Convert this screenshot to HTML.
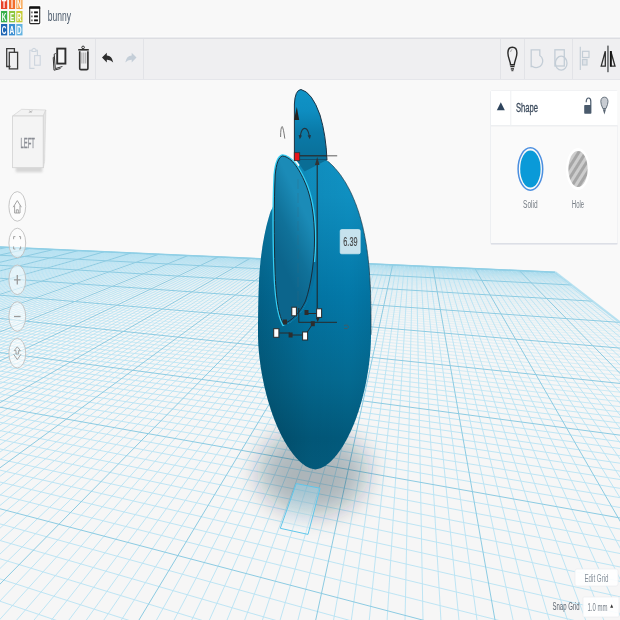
<!DOCTYPE html>
<html><head><meta charset="utf-8">
<style>
html,body{margin:0;padding:0;width:620px;height:620px;overflow:hidden;background:#f9f9f9;font-family:"Liberation Sans",sans-serif;}
svg{position:absolute;left:0;top:0;}
</style></head><body>
<svg class="grid" width="620" height="620" viewBox="0 0 620 620">
<polygon points="555.1,272.2 -61.7,244.2 -821.2,373.0 3083.9,2229.5" fill="#f6f6f6"/>
<g shape-rendering="crispEdges"><polygon points="555.1,272.2 -61.7,244.2 -65.0,244.8 556.6,273.4" fill="#8ccfe6" fill-opacity="0.750"/><polygon points="556.6,273.4 -65.0,244.8 -68.3,245.4 558.1,274.6" fill="#8ccfe6" fill-opacity="0.679"/><polygon points="558.1,274.6 -68.3,245.4 -71.7,245.9 559.7,275.8" fill="#8ccfe6" fill-opacity="0.614"/><polygon points="559.7,275.8 -71.7,245.9 -75.1,246.5 561.3,277.0" fill="#8ccfe6" fill-opacity="0.556"/><polygon points="561.3,277.0 -75.1,246.5 -78.6,247.1 562.9,278.3" fill="#8ccfe6" fill-opacity="0.503"/><polygon points="562.9,278.3 -78.6,247.1 -82.1,247.7 564.6,279.5" fill="#8ccfe6" fill-opacity="0.455"/><polygon points="564.6,279.5 -82.1,247.7 -85.6,248.3 566.3,280.9" fill="#8ccfe6" fill-opacity="0.412"/><polygon points="566.3,280.9 -85.6,248.3 -89.2,248.9 568.0,282.2" fill="#8ccfe6" fill-opacity="0.372"/><polygon points="568.0,282.2 -89.2,248.9 -92.9,249.5 569.8,283.6" fill="#8ccfe6" fill-opacity="0.337"/><polygon points="569.8,283.6 -92.9,249.5 -96.6,250.2 571.6,285.0" fill="#8ccfe6" fill-opacity="0.305"/><polygon points="571.6,285.0 -96.6,250.2 -100.4,250.8 573.5,286.5" fill="#8ccfe6" fill-opacity="0.276"/><polygon points="573.5,286.5 -100.4,250.8 -104.2,251.5 575.4,287.9" fill="#8ccfe6" fill-opacity="0.250"/><polygon points="575.4,287.9 -104.2,251.5 -108.1,252.1 577.4,289.5" fill="#8ccfe6" fill-opacity="0.226"/><polygon points="577.4,289.5 -108.1,252.1 -112.1,252.8 579.4,291.0" fill="#8ccfe6" fill-opacity="0.204"/><polygon points="579.4,291.0 -112.1,252.8 -116.1,253.5 581.4,292.6" fill="#8ccfe6" fill-opacity="0.185"/><polygon points="581.4,292.6 -116.1,253.5 -120.1,254.2 583.5,294.2" fill="#8ccfe6" fill-opacity="0.167"/><polygon points="583.5,294.2 -120.1,254.2 -124.3,254.9 585.7,295.9" fill="#8ccfe6" fill-opacity="0.151"/><polygon points="585.7,295.9 -124.3,254.9 -128.5,255.6 587.9,297.6" fill="#8ccfe6" fill-opacity="0.137"/><polygon points="587.9,297.6 -128.5,255.6 -132.7,256.3 590.2,299.4" fill="#8ccfe6" fill-opacity="0.124"/><polygon points="590.2,299.4 -132.7,256.3 -137.1,257.0 592.6,301.2" fill="#8ccfe6" fill-opacity="0.112"/><polygon points="592.6,301.2 -137.1,257.0 -141.5,257.8 595.0,303.1" fill="#8ccfe6" fill-opacity="0.102"/><polygon points="595.0,303.1 -141.5,257.8 -145.9,258.5 597.4,305.0" fill="#8ccfe6" fill-opacity="0.092"/><polygon points="597.4,305.0 -145.9,258.5 -150.5,259.3 600.0,307.0" fill="#8ccfe6" fill-opacity="0.083"/><polygon points="600.0,307.0 -150.5,259.3 -155.1,260.1 602.6,309.0" fill="#8ccfe6" fill-opacity="0.075"/><polygon points="602.6,309.0 -155.1,260.1 -159.8,260.9 605.3,311.1" fill="#8ccfe6" fill-opacity="0.068"/><polygon points="605.3,311.1 -159.8,260.9 -164.5,261.7 608.0,313.2" fill="#8ccfe6" fill-opacity="0.062"/><polygon points="608.0,313.2 -164.5,261.7 -169.4,262.5 610.9,315.4" fill="#8ccfe6" fill-opacity="0.056"/><polygon points="610.9,315.4 -169.4,262.5 -174.3,263.3 613.8,317.7" fill="#8ccfe6" fill-opacity="0.050"/><polygon points="613.8,317.7 -174.3,263.3 -179.3,264.2 616.8,320.0" fill="#8ccfe6" fill-opacity="0.046"/><polygon points="616.8,320.0 -179.3,264.2 -184.4,265.1 619.9,322.4" fill="#8ccfe6" fill-opacity="0.041"/><polygon points="619.9,322.4 -184.4,265.1 -189.6,265.9 623.1,324.9" fill="#8ccfe6" fill-opacity="0.037"/><polygon points="623.1,324.9 -189.6,265.9 -194.9,266.8 626.5,327.5" fill="#8ccfe6" fill-opacity="0.034"/><polygon points="626.5,327.5 -194.9,266.8 -200.3,267.7 629.9,330.1" fill="#8ccfe6" fill-opacity="0.031"/><polygon points="629.9,330.1 -200.3,267.7 -205.7,268.7 633.4,332.8" fill="#8ccfe6" fill-opacity="0.028"/><polygon points="633.4,332.8 -205.7,268.7 -211.3,269.6 637.1,335.7" fill="#8ccfe6" fill-opacity="0.025"/><polygon points="637.1,335.7 -211.3,269.6 -217.0,270.6 640.8,338.6" fill="#8ccfe6" fill-opacity="0.023"/><polygon points="640.8,338.6 -217.0,270.6 -222.7,271.6 644.7,341.6" fill="#8ccfe6" fill-opacity="0.020"/><polygon points="644.7,341.6 -222.7,271.6 -228.6,272.6 648.8,344.7" fill="#8ccfe6" fill-opacity="0.019"/><polygon points="648.8,344.7 -228.6,272.6 -234.6,273.6 652.9,348.0" fill="#8ccfe6" fill-opacity="0.017"/><polygon points="652.9,348.0 -234.6,273.6 -240.7,274.6 657.3,351.3" fill="#8ccfe6" fill-opacity="0.015"/></g>
<path d="M552.0 272.1L2943.7 2162.8M547.2 271.9L2747.3 2069.4M542.5 271.6L2568.6 1984.5M537.9 271.4L2405.4 1906.9M533.2 271.2L2255.8 1835.8M528.6 271.0L2118.1 1770.3M524.0 270.8L1990.9 1709.9M514.9 270.4L1763.7 1601.9M510.3 270.2L1661.9 1553.4M505.8 270.0L1566.8 1508.2M501.4 269.8L1477.8 1465.9M496.9 269.6L1394.3 1426.3M492.5 269.4L1315.9 1389.0M488.1 269.2L1242.1 1353.9M483.7 269.0L1172.5 1320.8M479.3 268.8L1106.8 1289.6M470.7 268.4L985.6 1232.0M466.4 268.2L929.7 1205.4M462.1 268.0L876.6 1180.1M457.8 267.8L826.0 1156.1M453.6 267.6L777.9 1133.2M449.4 267.4L732.0 1111.4M445.2 267.2L688.2 1090.6M441.0 267.0L646.3 1070.6M436.9 266.9L606.2 1051.6M428.7 266.5L531.1 1015.9M424.6 266.3L495.8 999.1M420.5 266.1L461.9 983.0M416.5 265.9L429.4 967.5M412.4 265.7L398.1 952.7M408.4 265.6L368.0 938.4M404.5 265.4L339.0 924.6M400.5 265.2L311.0 911.3M396.6 265.0L284.1 898.5M388.7 264.7L233.0 874.2M384.8 264.5L208.7 862.6M381.0 264.3L185.3 851.5M377.1 264.1L162.6 840.7M373.3 264.0L140.6 830.3M369.5 263.8L119.4 820.2M365.7 263.6L98.8 810.4M361.9 263.5L78.8 800.9M358.2 263.3L59.4 791.7M350.7 262.9L22.4 774.1M347.0 262.8L4.7 765.7M343.3 262.6L-12.5 757.5M339.6 262.4L-29.2 749.6M336.0 262.3L-45.4 741.8M332.4 262.1L-61.2 734.3M328.7 262.0L-76.6 727.0M325.1 261.8L-91.6 719.9M321.6 261.6L-106.2 713.0M314.4 261.3L-134.2 699.6M310.9 261.1L-147.7 693.2M307.4 261.0L-160.8 687.0M303.9 260.8L-173.6 680.9M300.4 260.7L-186.2 674.9M297.0 260.5L-198.4 669.1M293.5 260.4L-210.3 663.5M290.1 260.2L-221.9 657.9M286.6 260.0L-233.3 652.5M279.9 259.7L-255.3 642.1M276.5 259.6L-265.9 637.0M273.1 259.4L-276.2 632.1M269.8 259.3L-286.4 627.3M266.5 259.1L-296.3 622.6M263.1 259.0L-306.0 617.9M259.8 258.8L-315.5 613.4M256.6 258.7L-324.9 609.0M253.3 258.5L-334.0 604.7M246.8 258.2L-351.6 596.3M243.6 258.1L-360.2 592.2M240.4 257.9L-368.6 588.2M237.2 257.8L-376.8 584.3M234.0 257.7L-384.9 580.4M230.8 257.5L-392.8 576.7M227.7 257.4L-400.6 573.0M224.5 257.2L-408.2 569.4M221.4 257.1L-415.7 565.8M215.2 256.8L-430.2 558.9M212.1 256.7L-437.3 555.6M209.0 256.5L-444.2 552.3M206.0 256.4L-451.0 549.0M202.9 256.2L-457.7 545.8M199.9 256.1L-464.3 542.7M196.9 256.0L-470.7 539.7M193.9 255.8L-477.1 536.6M190.9 255.7L-483.3 533.7M184.9 255.4L-495.4 527.9M182.0 255.3L-501.4 525.1M179.0 255.2L-507.2 522.3M176.1 255.0L-512.9 519.6M173.2 254.9L-518.6 516.9M170.3 254.8L-524.1 514.3M167.4 254.6L-529.6 511.7M164.5 254.5L-534.9 509.1M161.7 254.4L-540.2 506.6M156.0 254.1L-550.5 501.7M153.1 254.0L-555.5 499.3M150.3 253.9L-560.5 497.0M147.5 253.7L-565.4 494.6M144.7 253.6L-570.2 492.4M141.9 253.5L-574.9 490.1M139.1 253.4L-579.6 487.9M136.4 253.2L-584.2 485.7M133.6 253.1L-588.7 483.5M128.1 252.9L-597.6 479.3M125.4 252.7L-601.9 477.3M122.7 252.6L-606.2 475.2M120.0 252.5L-610.4 473.2M117.3 252.4L-614.6 471.3M114.7 252.2L-618.7 469.3M112.0 252.1L-622.7 467.4M109.4 252.0L-626.7 465.5M106.7 251.9L-630.6 463.6M101.5 251.6L-638.3 460.0M98.9 251.5L-642.1 458.2M96.3 251.4L-645.8 456.4M93.7 251.3L-649.5 454.7M91.1 251.2L-653.1 452.9M88.5 251.1L-656.7 451.2M86.0 250.9L-660.2 449.6M83.4 250.8L-663.7 447.9M80.9 250.7L-667.2 446.3M75.8 250.5L-673.9 443.1M73.3 250.4L-677.2 441.5M70.8 250.3L-680.5 439.9M68.3 250.1L-683.7 438.4M65.9 250.0L-686.9 436.9M63.4 249.9L-690.1 435.4M60.9 249.8L-693.2 433.9M58.5 249.7L-696.2 432.4M56.0 249.6L-699.3 431.0M51.2 249.4L-705.2 428.2M48.8 249.3L-708.2 426.8M46.4 249.1L-711.1 425.4M44.0 249.0L-713.9 424.0M41.6 248.9L-716.8 422.7M39.2 248.8L-719.6 421.4M36.8 248.7L-722.3 420.0M34.5 248.6L-725.1 418.7M32.1 248.5L-727.8 417.5M27.5 248.3L-733.1 414.9M25.2 248.2L-735.7 413.7M22.8 248.1L-738.3 412.5M20.5 248.0L-740.8 411.3M18.2 247.9L-743.3 410.1M16.0 247.8L-745.8 408.9M13.7 247.7L-748.3 407.7M11.4 247.6L-750.8 406.5M9.1 247.5L-753.2 405.4" stroke="#bae4f3" stroke-width="0.95" fill="none"/>
<g stroke="#bae4f3" stroke-width="0.95" fill="none"><path d="M556.6 273.4L-65.0 244.8" stroke-opacity="0.20"/><path d="M558.1 274.6L-68.3 245.4" stroke-opacity="0.20"/><path d="M559.7 275.8L-71.7 245.9" stroke-opacity="0.20"/><path d="M561.3 277.0L-75.1 246.5" stroke-opacity="0.20"/><path d="M562.9 278.3L-78.6 247.1" stroke-opacity="0.20"/><path d="M564.6 279.5L-82.1 247.7" stroke-opacity="0.20"/><path d="M566.3 280.9L-85.6 248.3" stroke-opacity="0.20"/><path d="M568.0 282.2L-89.2 248.9" stroke-opacity="0.20"/><path d="M569.8 283.6L-92.9 249.5" stroke-opacity="0.20"/><path d="M573.5 286.5L-100.4 250.8" stroke-opacity="0.20"/><path d="M575.4 287.9L-104.2 251.5" stroke-opacity="0.20"/><path d="M577.4 289.5L-108.1 252.1" stroke-opacity="0.20"/><path d="M579.4 291.0L-112.1 252.8" stroke-opacity="0.20"/><path d="M581.4 292.6L-116.1 253.5" stroke-opacity="0.20"/><path d="M583.5 294.2L-120.1 254.2" stroke-opacity="0.20"/><path d="M585.7 295.9L-124.3 254.9" stroke-opacity="0.20"/><path d="M587.9 297.6L-128.5 255.6" stroke-opacity="0.20"/><path d="M590.2 299.4L-132.7 256.3" stroke-opacity="0.20"/><path d="M595.0 303.1L-141.5 257.8" stroke-opacity="0.20"/><path d="M597.4 305.0L-145.9 258.5" stroke-opacity="0.20"/><path d="M600.0 307.0L-150.5 259.3" stroke-opacity="0.20"/><path d="M602.6 309.0L-155.1 260.1" stroke-opacity="0.20"/><path d="M605.3 311.1L-159.8 260.9" stroke-opacity="0.21"/><path d="M608.0 313.2L-164.5 261.7" stroke-opacity="0.22"/><path d="M610.9 315.4L-169.4 262.5" stroke-opacity="0.23"/><path d="M613.8 317.7L-174.3 263.3" stroke-opacity="0.24"/><path d="M616.8 320.0L-179.3 264.2" stroke-opacity="0.25"/><path d="M623.1 324.9L-189.6 265.9" stroke-opacity="0.28"/><path d="M626.5 327.5L-194.9 266.8" stroke-opacity="0.29"/><path d="M629.9 330.1L-200.3 267.7" stroke-opacity="0.31"/><path d="M633.4 332.8L-205.7 268.7" stroke-opacity="0.32"/><path d="M637.1 335.7L-211.3 269.6" stroke-opacity="0.34"/><path d="M640.8 338.6L-217.0 270.6" stroke-opacity="0.35"/><path d="M644.7 341.6L-222.7 271.6" stroke-opacity="0.37"/><path d="M648.8 344.7L-228.6 272.6" stroke-opacity="0.39"/><path d="M652.9 348.0L-234.6 273.6" stroke-opacity="0.40"/><path d="M661.8 354.8L-246.9 275.7" stroke-opacity="0.44"/><path d="M666.4 358.4L-253.3 276.7" stroke-opacity="0.46"/><path d="M671.3 362.1L-259.7 277.8" stroke-opacity="0.48"/><path d="M676.3 366.0L-266.3 278.9" stroke-opacity="0.51"/><path d="M681.5 370.1L-273.0 280.1" stroke-opacity="0.53"/><path d="M687.0 374.3L-279.8 281.2" stroke-opacity="0.55"/><path d="M692.7 378.7L-286.8 282.4" stroke-opacity="0.58"/><path d="M698.6 383.3L-294.0 283.6" stroke-opacity="0.60"/><path d="M704.8 388.1L-301.2 284.9" stroke-opacity="0.63"/><path d="M717.9 398.3L-316.2 287.4" stroke-opacity="0.69"/><path d="M725.0 403.7L-324.0 288.7" stroke-opacity="0.72"/><path d="M732.4 409.4L-331.9 290.1" stroke-opacity="0.76"/><path d="M740.1 415.4L-339.9 291.4" stroke-opacity="0.79"/><path d="M748.3 421.7L-348.2 292.8" stroke-opacity="0.83"/><path d="M756.8 428.4L-356.6 294.3" stroke-opacity="0.87"/><path d="M765.8 435.3L-365.3 295.7" stroke-opacity="0.91"/><path d="M775.3 442.7L-374.1 297.2" stroke-opacity="0.95"/><path d="M785.4 450.4L-383.1 298.7" stroke-opacity="1.00"/><path d="M807.2 467.3L-401.8 301.9" stroke-opacity="1.00"/><path d="M819.1 476.5L-411.4 303.6" stroke-opacity="1.00"/><path d="M831.7 486.3L-421.3 305.2" stroke-opacity="1.00"/><path d="M845.2 496.7L-431.5 307.0" stroke-opacity="1.00"/><path d="M859.5 507.8L-441.9 308.7" stroke-opacity="1.00"/><path d="M874.9 519.7L-452.5 310.5" stroke-opacity="1.00"/><path d="M891.3 532.4L-463.4 312.4" stroke-opacity="1.00"/><path d="M909.0 546.1L-474.6 314.3" stroke-opacity="1.00"/><path d="M928.0 560.8L-486.1 316.2" stroke-opacity="1.00"/><path d="M970.7 593.9L-510.0 320.3" stroke-opacity="1.00"/><path d="M994.9 612.6L-522.4 322.4" stroke-opacity="1.00"/><path d="M1021.3 633.1L-535.1 324.5" stroke-opacity="1.00"/><path d="M1050.2 655.4L-548.3 326.8" stroke-opacity="1.00"/><path d="M1082.0 680.0L-561.7 329.0" stroke-opacity="1.00"/><path d="M1117.1 707.2L-575.6 331.4" stroke-opacity="1.00"/><path d="M1156.1 737.4L-589.8 333.8" stroke-opacity="1.00"/><path d="M1199.7 771.2L-604.5 336.3" stroke-opacity="1.00"/><path d="M1248.8 809.1L-619.6 338.9" stroke-opacity="1.00"/><path d="M1368.0 901.4L-651.2 344.2" stroke-opacity="1.00"/><path d="M1441.3 958.1L-667.8 347.0" stroke-opacity="1.00"/><path d="M1526.9 1024.4L-684.8 349.9" stroke-opacity="1.00"/><path d="M1628.0 1102.6L-702.4 352.9" stroke-opacity="1.00"/><path d="M1749.3 1196.5L-720.6 356.0" stroke-opacity="1.00"/><path d="M1897.6 1311.3L-739.4 359.2" stroke-opacity="1.00"/><path d="M2083.0 1454.8L-758.8 362.5" stroke-opacity="1.00"/><path d="M2321.3 1639.2L-778.9 365.9" stroke-opacity="1.00"/><path d="M2639.1 1885.2L-799.7 369.4" stroke-opacity="1.00"/></g>
<path d="M519.4 270.6L1873.1 1653.9M475.0 268.6L1044.6 1260.0M432.8 266.7L567.8 1033.4M392.6 264.9L258.1 886.1M354.4 263.1L40.7 782.8M318.0 261.5L-120.4 706.2M283.2 259.9L-244.4 647.2M250.0 258.4L-342.9 600.4M218.3 256.9L-423.0 562.3M187.9 255.6L-489.4 530.8M158.8 254.2L-545.4 504.2M130.9 253.0L-593.2 481.4M104.1 251.8L-634.5 461.8M78.3 250.6L-670.6 444.7M53.6 249.5L-702.3 429.6M29.8 248.4L-730.4 416.2M6.9 247.4L-755.6 404.2M555.1 272.2L-61.7 244.2M571.6 285.0L-96.6 250.2M592.6 301.2L-137.1 257.0M619.9 322.4L-184.4 265.1M657.3 351.3L-240.7 274.6M711.2 393.0L-308.6 286.1M796.0 458.6L-392.3 300.3M948.5 576.7L-497.9 318.2M1304.4 852.2L-635.2 341.5M3083.9 2229.5L-821.2 373.0" stroke="#8ccbe2" stroke-width="1.0" fill="none"/>
<path d="M555.1 272.2L-61.7 244.2" stroke="#8fcfe6" stroke-width="1.5" fill="none"/>
<path d="M555.1 272.2L3083.9 2229.5" stroke="#a8dbee" stroke-width="2.2" fill="none" opacity="0.8"/>
</svg>
<svg width="620" height="620" viewBox="0 0 620 620" style="font-family:'Liberation Sans',sans-serif;will-change:transform">
<defs>
  <filter id="blur2" x="-50%" y="-50%" width="200%" height="200%"><feGaussianBlur stdDeviation="1.2"/></filter>
  <filter id="blur1" x="-50%" y="-50%" width="200%" height="200%"><feGaussianBlur stdDeviation="11"/></filter>
  <linearGradient id="bodyg" gradientUnits="userSpaceOnUse" x1="0" y1="159" x2="0" y2="469">
    <stop offset="0" stop-color="#1092c4"/>
    <stop offset="0.12" stop-color="#0f8fc0"/>
    <stop offset="0.44" stop-color="#0378a8"/>
    <stop offset="0.71" stop-color="#046a91"/>
    <stop offset="0.9" stop-color="#02597b"/>
    <stop offset="1" stop-color="#035c7e"/>
  </linearGradient>
  <linearGradient id="bodyh" gradientUnits="userSpaceOnUse" x1="258" y1="0" x2="371" y2="0">
    <stop offset="0" stop-color="#000" stop-opacity="0.2"/>
    <stop offset="0.45" stop-color="#000" stop-opacity="0.04"/>
    <stop offset="0.8" stop-color="#000" stop-opacity="0"/>
    <stop offset="1" stop-color="#000" stop-opacity="0.05"/>
  </linearGradient>
  <linearGradient id="earg" gradientUnits="userSpaceOnUse" x1="0" y1="90" x2="0" y2="160">
    <stop offset="0" stop-color="#1093c6"/>
    <stop offset="0.3" stop-color="#0e8dc0"/>
    <stop offset="0.6" stop-color="#0a7aa8"/>
    <stop offset="1" stop-color="#0a6f98"/>
  </linearGradient>
  <linearGradient id="inng" gradientUnits="userSpaceOnUse" x1="276" y1="250" x2="314" y2="232">
    <stop offset="0" stop-color="#0c658c"/>
    <stop offset="0.45" stop-color="#107199"/>
    <stop offset="1" stop-color="#1b8bb7"/>
  </linearGradient>
  <radialGradient id="shad" cx="0.5" cy="0.5" r="0.5">
    <stop offset="0" stop-color="#000" stop-opacity="0.28"/>
    <stop offset="0.6" stop-color="#000" stop-opacity="0.12"/>
    <stop offset="1" stop-color="#000" stop-opacity="0"/>
  </radialGradient>
  <pattern id="holep" width="6" height="6" patternUnits="userSpaceOnUse" patternTransform="rotate(32)">
    <rect width="6" height="6" fill="#cdcdcd"/><rect width="3" height="6" fill="#a6a6a6"/>
  </pattern>
</defs>

<!-- top bar -->
<rect x="0" y="0" width="620" height="37" fill="#f8f8f8"/>
<rect x="0" y="36.3" width="620" height="1.2" fill="#fbfbfc"/>
<rect x="0" y="37.5" width="620" height="1.7" fill="#dcdde2"/>
<rect x="0" y="39.2" width="620" height="39.8" fill="#efeff1"/>
<rect x="0" y="79" width="620" height="1" fill="#e5e6ea"/>

<!-- logo -->
<g>
<rect x="1" y="-2" width="6.2" height="11" fill="#e8412a"/>
<rect x="9" y="-2" width="6.1" height="11" fill="#f26c2b"/>
<rect x="16.3" y="-2" width="6.2" height="11" fill="#f89c3f"/>
<rect x="1" y="11" width="6.2" height="11.3" fill="#36b04b"/>
<rect x="9" y="11" width="6.1" height="11.3" fill="#8cc63f"/>
<rect x="16.3" y="11" width="6.2" height="11.3" fill="#c6cc37"/>
<rect x="1" y="24" width="6.2" height="11.4" fill="#1d65b4"/>
<rect x="9" y="24" width="6.1" height="11.4" fill="#3a8ed2"/>
<rect x="16.3" y="24" width="6.2" height="11.4" fill="#64b3e1"/>
<g fill="#fff" font-weight="bold" font-size="10.5" text-anchor="middle">
<text x="4.1" y="8" textLength="4.6" lengthAdjust="spacingAndGlyphs">T</text>
<text x="12" y="8" textLength="2" lengthAdjust="spacingAndGlyphs">I</text>
<text x="19.4" y="8" textLength="4.6" lengthAdjust="spacingAndGlyphs">N</text>
<text x="4.1" y="21" textLength="4.6" lengthAdjust="spacingAndGlyphs">K</text>
<text x="12" y="21" textLength="4.2" lengthAdjust="spacingAndGlyphs">E</text>
<text x="19.4" y="21" textLength="4.6" lengthAdjust="spacingAndGlyphs">R</text>
<text x="4.1" y="34" textLength="4.6" lengthAdjust="spacingAndGlyphs">C</text>
<text x="12" y="34" textLength="4.8" lengthAdjust="spacingAndGlyphs">A</text>
<text x="19.4" y="34" textLength="4.6" lengthAdjust="spacingAndGlyphs">D</text>
</g>
</g>
<!-- list icon -->
<rect x="28" y="5" width="13.5" height="20.5" fill="#fdfdfd"/>
<rect x="29.7" y="7" width="10" height="16.6" rx="0.8" fill="#fff" stroke="#2a2a2a" stroke-width="1.1"/>
<rect x="29.3" y="6.4" width="10.9" height="2.4" fill="#111"/>
<g fill="#777"><rect x="30.9" y="11.5" width="1.9" height="1.8"/><rect x="30.9" y="15.5" width="1.9" height="1.8"/><rect x="30.9" y="19.5" width="1.9" height="1.8"/></g>
<g fill="#111"><rect x="34.1" y="11.4" width="3.8" height="1.9"/><rect x="34.1" y="15.4" width="3.8" height="1.9"/><rect x="34.1" y="19.4" width="3.8" height="1.9"/></g>
<text x="47.8" y="20.8" font-size="15.3" fill="#4b5a6b" textLength="23.2" lengthAdjust="spacingAndGlyphs">bunny</text>

<!-- toolbar icons -->
<g fill="none" stroke="#3a3a3a" stroke-width="1.3">
 <!-- copy -->
 <path d="M10.5 66.5H6.7V48.6H14.4V52.3"/>
 <rect x="9.3" y="52.3" width="8.3" height="16.6"/>
</g>
<!-- duplicate -->
<g fill="none" stroke="#333" stroke-width="1">
 <path d="M55.8 53.5L54.2 54.2L55.3 68.6L62.4 66.5"/>
 <path d="M54.6 56.5L53.2 57.5L54 70.2L60.5 68.5"/>
</g>
<rect x="57.2" y="48.6" width="8.2" height="15" fill="#f7f7f8" stroke="#2e2e2e" stroke-width="1.9"/>
<!-- paste disabled -->
<g fill="none" stroke="#cdd5de" stroke-width="1.1">
 <path d="M32.3 50.3H29.8V68.4H34.5"/>
 <path d="M35.7 50.3H37.4V55.3"/>
 <path d="M32 51.5V49.8Q34 47 36 49.8V51.5Z"/>
 <rect x="34.6" y="55.6" width="5.6" height="9.6"/>
</g>
<!-- trash -->
<g fill="none" stroke="#2f2f2f" stroke-width="1.6">
 <path d="M78.2 49.8H88.8"/>
 <path d="M79.7 51.2V68.4Q79.7 69.6 81 69.6H86.6Q87.9 69.6 87.9 68.4V51.2"/>
</g>
<circle cx="83.1" cy="47.4" r="1.3" fill="none" stroke="#2f2f2f" stroke-width="1"/>
<g stroke="#7a7a7a" stroke-width="0.6"><path d="M81.9 52.5V63.5M83.8 52.5V63.5M85.7 52.5V63.5"/></g>
<!-- undo / redo -->
<path d="M102 57.6L106.8 52.8V55.6Q112 55.6 113.2 62.6Q110.8 59.5 106.8 59.7V62.6Z" fill="#2d2d2d"/>
<path d="M136.5 57.6L131.7 52.8V55.6Q126.5 55.6 125.3 62.6Q127.7 59.5 131.7 59.7V62.6Z" fill="#c4ced8"/>
<!-- separators -->
<g fill="#e2e3e7">
<rect x="95" y="39" width="1" height="40"/>
<rect x="143" y="39" width="1" height="40"/>
<rect x="500" y="39" width="1" height="40"/>
<rect x="524" y="39" width="1" height="40"/>
<rect x="572" y="39" width="1" height="40"/>
</g>
<!-- bulb -->
<g fill="none" stroke="#2b2b2b" stroke-width="1.4">
<path d="M510.5 64.8C510.5 61 507.9 58 507.9 53C507.9 49.3 509.8 47.3 512.4 47.3C515 47.3 516.9 49.3 516.9 53C516.9 58 514.3 61 514.3 64.8Z"/>
</g>
<g fill="#2b2b2b"><rect x="510.3" y="65.8" width="4.2" height="1.4"/><rect x="510.8" y="68.2" width="3.2" height="1.4"/><rect x="511.4" y="70.2" width="2" height="1"/></g>
<path d="M510.5 52Q511 49.6 512.4 49.2" stroke="#777" stroke-width="0.6" fill="none"/>
<!-- group shapes disabled -->
<g fill="none" stroke="#c3cdd6" stroke-width="1.3">
<path d="M531.2 66.5V49.8H539.8V55.5A6.2 6.2 0 1 1 532.6 66.5Z"/>
<rect x="554.9" y="49.8" width="9.4" height="16.2"/>
<ellipse cx="561.2" cy="63.2" rx="5.8" ry="7"/>
</g>
<!-- align -->
<g fill="none" stroke="#c3cdd6" stroke-width="1.2">
<path d="M580.3 46.8V70"/>
<rect x="582.5" y="51.3" width="6.5" height="6.2"/>
<rect x="582.5" y="59.5" width="4.5" height="5.5" fill="#dfe3e8"/>
</g>
<!-- mirror -->
<g>
<path d="M601.2 66.2L605.3 51.2V66.2Z" fill="none" stroke="#2e2e2e" stroke-width="1.3"/>
<path d="M610.8 51.2L615 66.2H610.8Z" fill="none" stroke="#2e2e2e" stroke-width="1.3"/>
<path d="M610.8 51V66.5" stroke="#111" stroke-width="1.8"/>
<rect x="607.1" y="45.6" width="1.7" height="26.6" fill="#6f7274"/>
</g>

<!-- view cube -->
<g>
<path d="M15.5 165H42.6L42.3 172.3H15.8Z" fill="#d6d6d6" filter="url(#blur2)"/>
<path d="M12.6 116L21.6 109.3L45.8 110L43.2 116Z" fill="#f2f2f2" stroke="#d2d2d2" stroke-width="0.7"/>
<path d="M43.2 116L45.8 110L44.6 161.5L43.2 168Z" fill="#e4e4e4" stroke="#d4d4d4" stroke-width="0.6"/>
<rect x="12.6" y="116" width="30.6" height="51.7" fill="#f4f4f4" stroke="#d2d2d2" stroke-width="0.8"/>
<text x="27.7" y="148" font-size="14.5" fill="#8a8d94" stroke="#8a8d94" stroke-width="0.4" text-anchor="middle" textLength="14.2" lengthAdjust="spacingAndGlyphs">LEFT</text>
<path d="M28.8 112.5L32.5 110.8M29.5 110.6L31.5 113" stroke="#999" stroke-width="0.6"/>
</g>
<!-- nav buttons -->
<g fill="#ffffff" fill-opacity="0.55" stroke="#c0c0c0" stroke-width="0.9">
<ellipse cx="17.3" cy="206.4" rx="8.4" ry="14.8"/>
<ellipse cx="17.3" cy="243" rx="8.4" ry="14.8"/>
<ellipse cx="17.3" cy="279.8" rx="8.4" ry="14.8"/>
<ellipse cx="17.3" cy="316.5" rx="8.4" ry="14.8"/>
<ellipse cx="17.3" cy="353.2" rx="8.4" ry="14.8"/>
</g>
<g fill="none" stroke="#9a9a9a" stroke-width="0.9">
<path d="M13.2 207.2L17.3 200.6L21.4 207.2M14.6 205.5V213H20V205.5M16.3 213V209.8H18.3V213"/>
<path d="M13.6 239.2V236.6H15.4M19 236.6H20.6V239.2M20.6 246.4V249H19M15.4 249H13.6V246.4"/>
<path d="M17.3 275V284.6M14 279.8H20.6" stroke-width="1.3"/>
<path d="M14 316.5H20.6" stroke-width="1.3"/>
<path d="M17.3 346.8L20.4 350.6H18.6V354H16V350.6H14.2Z"/><path d="M13.6 354.2L17.3 359.6L21 354.2"/>
</g>

<!-- shadow -->
<g filter="url(#blur1)"><ellipse cx="313" cy="472" rx="56" ry="44" fill="#14222e" fill-opacity="0.26"/><ellipse cx="312" cy="478" rx="34" ry="24" fill="#14222e" fill-opacity="0.06"/></g>
<!-- footprint -->
<linearGradient id="fpg" gradientUnits="userSpaceOnUse" x1="0" y1="484" x2="0" y2="534"><stop offset="0" stop-color="#8fd3ee" stop-opacity="0.45"/><stop offset="1" stop-color="#ffffff" stop-opacity="0.3"/></linearGradient>
<path d="M296.3 483.6L320.1 488.2L308 534.4L280.3 528.3Z" fill="url(#fpg)" stroke="#5ec6ea" stroke-width="1"/>

<!-- body -->
<path d="M316.7 155.0 L319.9 156.2 L322.2 157.4 L324.2 158.6 L325.9 159.9 L327.5 161.1 L329.0 162.3 L330.4 163.5 L331.7 164.7 L332.9 165.9 L334.0 167.1 L335.1 168.4 L336.2 169.6 L337.2 170.8 L338.2 172.0 L339.2 173.2 L340.1 174.4 L341.0 175.6 L341.8 176.9 L342.6 178.1 L343.4 179.3 L344.2 180.5 L345.0 181.7 L345.7 182.9 L346.4 184.1 L347.1 185.4 L347.8 186.6 L348.4 187.8 L349.1 189.0 L349.7 190.2 L350.3 191.4 L350.9 192.6 L351.5 193.9 L352.0 195.1 L352.6 196.3 L353.1 197.5 L353.6 198.7 L354.1 199.9 L354.6 201.1 L355.1 202.4 L355.6 203.6 L356.1 204.8 L356.5 206.0 L356.9 207.2 L357.4 208.4 L357.8 209.6 L358.2 210.9 L358.6 212.1 L359.0 213.3 L359.4 214.5 L359.7 215.7 L360.1 216.9 L360.4 218.1 L360.8 219.4 L361.1 220.6 L361.4 221.8 L361.8 223.0 L362.1 224.2 L362.4 225.4 L362.7 226.6 L363.0 227.9 L363.2 229.1 L363.5 230.3 L363.8 231.5 L364.0 232.7 L364.3 233.9 L364.5 235.1 L364.8 236.4 L365.0 237.6 L365.2 238.8 L365.4 240.0 L365.7 241.2 L365.9 242.4 L366.1 243.6 L366.3 244.9 L366.5 246.1 L366.7 247.3 L366.8 248.5 L367.0 249.7 L367.2 250.9 L367.3 252.1 L367.5 253.4 L367.7 254.6 L367.8 255.8 L368.0 257.0 L368.1 258.2 L368.2 259.4 L368.4 260.6 L368.5 261.9 L368.6 263.1 L368.7 264.3 L368.9 265.5 L369.0 266.7 L369.1 267.9 L369.2 269.1 L369.3 270.4 L369.4 271.6 L369.5 272.8 L369.5 274.0 L369.6 275.2 L369.7 276.4 L369.8 277.6 L369.9 278.9 L369.9 280.1 L370.0 281.3 L370.1 282.5 L370.1 283.7 L370.2 284.9 L370.3 286.1 L370.3 287.4 L370.4 288.6 L370.4 289.8 L370.5 291.0 L370.5 292.2 L370.5 293.4 L370.6 294.6 L370.6 295.9 L370.6 297.1 L370.7 298.3 L370.7 299.5 L370.7 300.7 L370.8 301.9 L370.8 303.1 L370.8 304.4 L370.8 305.6 L370.9 306.8 L370.9 308.0 L370.9 309.2 L370.9 310.4 L370.9 311.6 L370.9 312.9 L370.9 314.1 L371.0 315.3 L371.0 316.5 L371.0 317.7 L371.0 318.9 L371.0 320.1 L371.0 321.4 L371.0 322.6 L371.0 323.8 L371.0 325.0 L371.0 326.2 L371.0 327.4 L371.0 328.6 L371.0 329.9 L371.0 331.1 L371.0 332.3 L371.0 333.5 L371.0 334.7 L371.0 335.9 L371.0 337.1 L371.0 338.4 L370.9 339.6 L370.9 340.8 L370.9 342.0 L370.8 343.2 L370.8 344.4 L370.7 345.6 L370.6 346.9 L370.6 348.1 L370.5 349.3 L370.4 350.5 L370.3 351.7 L370.2 352.9 L370.1 354.1 L370.0 355.4 L369.9 356.6 L369.7 357.8 L369.6 359.0 L369.5 360.2 L369.3 361.4 L369.2 362.6 L369.1 363.9 L368.9 365.1 L368.7 366.3 L368.6 367.5 L368.4 368.7 L368.2 369.9 L368.0 371.1 L367.8 372.4 L367.6 373.6 L367.4 374.8 L367.2 376.0 L367.0 377.2 L366.8 378.4 L366.6 379.6 L366.3 380.9 L366.1 382.1 L365.9 383.3 L365.6 384.5 L365.4 385.7 L365.1 386.9 L364.8 388.1 L364.6 389.4 L364.3 390.6 L364.0 391.8 L363.7 393.0 L363.4 394.2 L363.1 395.4 L362.8 396.6 L362.5 397.9 L362.2 399.1 L361.8 400.3 L361.5 401.5 L361.2 402.7 L360.8 403.9 L360.4 405.1 L360.1 406.4 L359.7 407.6 L359.3 408.8 L358.9 410.0 L358.6 411.2 L358.2 412.4 L357.7 413.6 L357.3 414.9 L356.9 416.1 L356.5 417.3 L356.0 418.5 L355.6 419.7 L355.1 420.9 L354.6 422.1 L354.2 423.4 L353.7 424.6 L353.2 425.8 L352.6 427.0 L352.1 428.2 L351.6 429.4 L351.0 430.6 L350.5 431.9 L349.9 433.1 L349.3 434.3 L348.7 435.5 L348.1 436.7 L347.5 437.9 L346.9 439.1 L346.2 440.4 L345.5 441.6 L344.8 442.8 L344.1 444.0 L343.4 445.2 L342.7 446.4 L341.9 447.6 L341.1 448.9 L340.3 450.1 L339.4 451.3 L338.5 452.5 L337.6 453.7 L336.7 454.9 L335.7 456.1 L334.6 457.4 L333.5 458.6 L332.4 459.8 L331.2 461.0 L329.9 462.2 L328.4 463.4 L326.9 464.6 L325.2 465.9 L323.1 467.1 L320.6 468.3 L315.3 469.5 L315.3 469.5 L310.0 468.3 L307.4 467.1 L305.4 465.9 L303.6 464.6 L302.1 463.4 L300.6 462.2 L299.3 461.0 L298.1 459.8 L296.9 458.6 L295.8 457.4 L294.8 456.1 L293.8 454.9 L292.8 453.7 L291.9 452.5 L291.0 451.3 L290.1 450.1 L289.3 448.9 L288.5 447.6 L287.7 446.4 L286.9 445.2 L286.2 444.0 L285.4 442.8 L284.7 441.6 L284.0 440.4 L283.4 439.1 L282.7 437.9 L282.1 436.7 L281.5 435.5 L280.8 434.3 L280.2 433.1 L279.7 431.9 L279.1 430.6 L278.5 429.4 L278.0 428.2 L277.4 427.0 L276.9 425.8 L276.4 424.6 L275.9 423.4 L275.4 422.1 L274.9 420.9 L274.4 419.7 L274.0 418.5 L273.5 417.3 L273.1 416.1 L272.6 414.9 L272.2 413.6 L271.8 412.4 L271.4 411.2 L270.9 410.0 L270.5 408.8 L270.2 407.6 L269.8 406.4 L269.4 405.1 L269.0 403.9 L268.7 402.7 L268.3 401.5 L267.9 400.3 L267.6 399.1 L267.3 397.9 L266.9 396.6 L266.6 395.4 L266.3 394.2 L266.0 393.0 L265.7 391.8 L265.4 390.6 L265.1 389.4 L264.8 388.1 L264.5 386.9 L264.2 385.7 L264.0 384.5 L263.7 383.3 L263.5 382.1 L263.2 380.9 L263.0 379.6 L262.7 378.4 L262.5 377.2 L262.3 376.0 L262.0 374.8 L261.8 373.6 L261.6 372.4 L261.4 371.1 L261.2 369.9 L261.0 368.7 L260.8 367.5 L260.6 366.3 L260.5 365.1 L260.3 363.9 L260.1 362.6 L260.0 361.4 L259.8 360.2 L259.7 359.0 L259.5 357.8 L259.4 356.6 L259.3 355.4 L259.1 354.1 L259.0 352.9 L258.9 351.7 L258.8 350.5 L258.7 349.3 L258.6 348.1 L258.5 346.9 L258.4 345.6 L258.3 344.4 L258.3 343.2 L258.2 342.0 L258.2 340.8 L258.1 339.6 L258.1 338.4 L258.0 337.1 L258.0 335.9 L258.0 334.7 L258.0 333.5 L258.0 332.3 L258.0 331.1 L258.0 329.9 L258.0 328.6 L258.0 327.4 L258.0 326.2 L258.0 325.0 L258.0 323.8 L258.0 322.6 L258.0 321.4 L258.1 320.1 L258.1 318.9 L258.1 317.7 L258.1 316.5 L258.1 315.3 L258.1 314.1 L258.1 312.9 L258.2 311.6 L258.2 310.4 L258.2 309.2 L258.2 308.0 L258.2 306.8 L258.3 305.6 L258.3 304.4 L258.3 303.1 L258.3 301.9 L258.4 300.7 L258.4 299.5 L258.4 298.3 L258.5 297.1 L258.5 295.9 L258.5 294.6 L258.6 293.4 L258.6 292.2 L258.6 291.0 L258.7 289.8 L258.7 288.6 L258.8 287.4 L258.8 286.1 L258.9 284.9 L258.9 283.7 L259.0 282.5 L259.0 281.3 L259.1 280.1 L259.1 278.9 L259.2 277.6 L259.3 276.4 L259.4 275.2 L259.5 274.0 L259.5 272.8 L259.6 271.6 L259.7 270.4 L259.8 269.1 L259.9 267.9 L260.0 266.7 L260.1 265.5 L260.3 264.3 L260.4 263.1 L260.5 261.9 L260.6 260.6 L260.8 259.4 L260.9 258.2 L261.0 257.0 L261.2 255.8 L261.3 254.6 L261.5 253.4 L261.7 252.1 L261.8 250.9 L262.0 249.7 L262.2 248.5 L262.3 247.3 L262.5 246.1 L262.7 244.9 L262.9 243.6 L263.1 242.4 L263.3 241.2 L263.6 240.0 L263.8 238.8 L264.0 237.6 L264.2 236.4 L264.5 235.1 L264.7 233.9 L265.0 232.7 L265.2 231.5 L265.5 230.3 L265.8 229.1 L266.0 227.9 L266.3 226.6 L266.6 225.4 L266.9 224.2 L267.2 223.0 L267.6 221.8 L267.9 220.6 L268.2 219.4 L268.6 218.1 L268.9 216.9 L269.3 215.7 L269.6 214.5 L270.0 213.3 L270.4 212.1 L270.8 210.9 L271.6 209.6 L272.3 208.4 L272.7 207.2 L273.2 206.0 L273.6 204.8 L274.0 203.6 L274.4 202.4 L274.9 201.1 L275.3 199.9 L275.7 198.7 L276.1 197.5 L276.6 196.3 L277.0 195.1 L283.1 193.9 L283.6 192.6 L284.1 191.4 L284.6 190.2 L285.1 189.0 L285.6 187.8 L286.2 186.6 L286.8 185.4 L287.4 184.1 L288.0 182.9 L288.6 181.7 L289.2 180.5 L289.9 179.3 L290.6 178.1 L291.3 176.9 L292.0 175.6 L292.8 174.4 L293.5 173.2 L294.3 172.0 L295.2 170.8 L296.0 169.6 L296.9 168.4 L297.9 167.1 L298.9 165.9 L299.9 164.7 L301.0 163.5 L302.2 162.3 L303.4 161.1 L304.8 159.9 L306.3 158.6 L307.9 157.4 L309.9 156.2 L312.6 155.0Z" fill="url(#bodyg)"/>
<path d="M316.7 155.0 L319.9 156.2 L322.2 157.4 L324.2 158.6 L325.9 159.9 L327.5 161.1 L329.0 162.3 L330.4 163.5 L331.7 164.7 L332.9 165.9 L334.0 167.1 L335.1 168.4 L336.2 169.6 L337.2 170.8 L338.2 172.0 L339.2 173.2 L340.1 174.4 L341.0 175.6 L341.8 176.9 L342.6 178.1 L343.4 179.3 L344.2 180.5 L345.0 181.7 L345.7 182.9 L346.4 184.1 L347.1 185.4 L347.8 186.6 L348.4 187.8 L349.1 189.0 L349.7 190.2 L350.3 191.4 L350.9 192.6 L351.5 193.9 L352.0 195.1 L352.6 196.3 L353.1 197.5 L353.6 198.7 L354.1 199.9 L354.6 201.1 L355.1 202.4 L355.6 203.6 L356.1 204.8 L356.5 206.0 L356.9 207.2 L357.4 208.4 L357.8 209.6 L358.2 210.9 L358.6 212.1 L359.0 213.3 L359.4 214.5 L359.7 215.7 L360.1 216.9 L360.4 218.1 L360.8 219.4 L361.1 220.6 L361.4 221.8 L361.8 223.0 L362.1 224.2 L362.4 225.4 L362.7 226.6 L363.0 227.9 L363.2 229.1 L363.5 230.3 L363.8 231.5 L364.0 232.7 L364.3 233.9 L364.5 235.1 L364.8 236.4 L365.0 237.6 L365.2 238.8 L365.4 240.0 L365.7 241.2 L365.9 242.4 L366.1 243.6 L366.3 244.9 L366.5 246.1 L366.7 247.3 L366.8 248.5 L367.0 249.7 L367.2 250.9 L367.3 252.1 L367.5 253.4 L367.7 254.6 L367.8 255.8 L368.0 257.0 L368.1 258.2 L368.2 259.4 L368.4 260.6 L368.5 261.9 L368.6 263.1 L368.7 264.3 L368.9 265.5 L369.0 266.7 L369.1 267.9 L369.2 269.1 L369.3 270.4 L369.4 271.6 L369.5 272.8 L369.5 274.0 L369.6 275.2 L369.7 276.4 L369.8 277.6 L369.9 278.9 L369.9 280.1 L370.0 281.3 L370.1 282.5 L370.1 283.7 L370.2 284.9 L370.3 286.1 L370.3 287.4 L370.4 288.6 L370.4 289.8 L370.5 291.0 L370.5 292.2 L370.5 293.4 L370.6 294.6 L370.6 295.9 L370.6 297.1 L370.7 298.3 L370.7 299.5 L370.7 300.7 L370.8 301.9 L370.8 303.1 L370.8 304.4 L370.8 305.6 L370.9 306.8 L370.9 308.0 L370.9 309.2 L370.9 310.4 L370.9 311.6 L370.9 312.9 L370.9 314.1 L371.0 315.3 L371.0 316.5 L371.0 317.7 L371.0 318.9 L371.0 320.1 L371.0 321.4 L371.0 322.6 L371.0 323.8 L371.0 325.0 L371.0 326.2 L371.0 327.4 L371.0 328.6 L371.0 329.9 L371.0 331.1 L371.0 332.3 L371.0 333.5 L371.0 334.7 L371.0 335.9 L371.0 337.1 L371.0 338.4 L370.9 339.6 L370.9 340.8 L370.9 342.0 L370.8 343.2 L370.8 344.4 L370.7 345.6 L370.6 346.9 L370.6 348.1 L370.5 349.3 L370.4 350.5 L370.3 351.7 L370.2 352.9 L370.1 354.1 L370.0 355.4 L369.9 356.6 L369.7 357.8 L369.6 359.0 L369.5 360.2 L369.3 361.4 L369.2 362.6 L369.1 363.9 L368.9 365.1 L368.7 366.3 L368.6 367.5 L368.4 368.7 L368.2 369.9 L368.0 371.1 L367.8 372.4 L367.6 373.6 L367.4 374.8 L367.2 376.0 L367.0 377.2 L366.8 378.4 L366.6 379.6 L366.3 380.9 L366.1 382.1 L365.9 383.3 L365.6 384.5 L365.4 385.7 L365.1 386.9 L364.8 388.1 L364.6 389.4 L364.3 390.6 L364.0 391.8 L363.7 393.0 L363.4 394.2 L363.1 395.4 L362.8 396.6 L362.5 397.9 L362.2 399.1 L361.8 400.3 L361.5 401.5 L361.2 402.7 L360.8 403.9 L360.4 405.1 L360.1 406.4 L359.7 407.6 L359.3 408.8 L358.9 410.0 L358.6 411.2 L358.2 412.4 L357.7 413.6 L357.3 414.9 L356.9 416.1 L356.5 417.3 L356.0 418.5 L355.6 419.7 L355.1 420.9 L354.6 422.1 L354.2 423.4 L353.7 424.6 L353.2 425.8 L352.6 427.0 L352.1 428.2 L351.6 429.4 L351.0 430.6 L350.5 431.9 L349.9 433.1 L349.3 434.3 L348.7 435.5 L348.1 436.7 L347.5 437.9 L346.9 439.1 L346.2 440.4 L345.5 441.6 L344.8 442.8 L344.1 444.0 L343.4 445.2 L342.7 446.4 L341.9 447.6 L341.1 448.9 L340.3 450.1 L339.4 451.3 L338.5 452.5 L337.6 453.7 L336.7 454.9 L335.7 456.1 L334.6 457.4 L333.5 458.6 L332.4 459.8 L331.2 461.0 L329.9 462.2 L328.4 463.4 L326.9 464.6 L325.2 465.9 L323.1 467.1 L320.6 468.3 L315.3 469.5 L315.3 469.5 L310.0 468.3 L307.4 467.1 L305.4 465.9 L303.6 464.6 L302.1 463.4 L300.6 462.2 L299.3 461.0 L298.1 459.8 L296.9 458.6 L295.8 457.4 L294.8 456.1 L293.8 454.9 L292.8 453.7 L291.9 452.5 L291.0 451.3 L290.1 450.1 L289.3 448.9 L288.5 447.6 L287.7 446.4 L286.9 445.2 L286.2 444.0 L285.4 442.8 L284.7 441.6 L284.0 440.4 L283.4 439.1 L282.7 437.9 L282.1 436.7 L281.5 435.5 L280.8 434.3 L280.2 433.1 L279.7 431.9 L279.1 430.6 L278.5 429.4 L278.0 428.2 L277.4 427.0 L276.9 425.8 L276.4 424.6 L275.9 423.4 L275.4 422.1 L274.9 420.9 L274.4 419.7 L274.0 418.5 L273.5 417.3 L273.1 416.1 L272.6 414.9 L272.2 413.6 L271.8 412.4 L271.4 411.2 L270.9 410.0 L270.5 408.8 L270.2 407.6 L269.8 406.4 L269.4 405.1 L269.0 403.9 L268.7 402.7 L268.3 401.5 L267.9 400.3 L267.6 399.1 L267.3 397.9 L266.9 396.6 L266.6 395.4 L266.3 394.2 L266.0 393.0 L265.7 391.8 L265.4 390.6 L265.1 389.4 L264.8 388.1 L264.5 386.9 L264.2 385.7 L264.0 384.5 L263.7 383.3 L263.5 382.1 L263.2 380.9 L263.0 379.6 L262.7 378.4 L262.5 377.2 L262.3 376.0 L262.0 374.8 L261.8 373.6 L261.6 372.4 L261.4 371.1 L261.2 369.9 L261.0 368.7 L260.8 367.5 L260.6 366.3 L260.5 365.1 L260.3 363.9 L260.1 362.6 L260.0 361.4 L259.8 360.2 L259.7 359.0 L259.5 357.8 L259.4 356.6 L259.3 355.4 L259.1 354.1 L259.0 352.9 L258.9 351.7 L258.8 350.5 L258.7 349.3 L258.6 348.1 L258.5 346.9 L258.4 345.6 L258.3 344.4 L258.3 343.2 L258.2 342.0 L258.2 340.8 L258.1 339.6 L258.1 338.4 L258.0 337.1 L258.0 335.9 L258.0 334.7 L258.0 333.5 L258.0 332.3 L258.0 331.1 L258.0 329.9 L258.0 328.6 L258.0 327.4 L258.0 326.2 L258.0 325.0 L258.0 323.8 L258.0 322.6 L258.0 321.4 L258.1 320.1 L258.1 318.9 L258.1 317.7 L258.1 316.5 L258.1 315.3 L258.1 314.1 L258.1 312.9 L258.2 311.6 L258.2 310.4 L258.2 309.2 L258.2 308.0 L258.2 306.8 L258.3 305.6 L258.3 304.4 L258.3 303.1 L258.3 301.9 L258.4 300.7 L258.4 299.5 L258.4 298.3 L258.5 297.1 L258.5 295.9 L258.5 294.6 L258.6 293.4 L258.6 292.2 L258.6 291.0 L258.7 289.8 L258.7 288.6 L258.8 287.4 L258.8 286.1 L258.9 284.9 L258.9 283.7 L259.0 282.5 L259.0 281.3 L259.1 280.1 L259.1 278.9 L259.2 277.6 L259.3 276.4 L259.4 275.2 L259.5 274.0 L259.5 272.8 L259.6 271.6 L259.7 270.4 L259.8 269.1 L259.9 267.9 L260.0 266.7 L260.1 265.5 L260.3 264.3 L260.4 263.1 L260.5 261.9 L260.6 260.6 L260.8 259.4 L260.9 258.2 L261.0 257.0 L261.2 255.8 L261.3 254.6 L261.5 253.4 L261.7 252.1 L261.8 250.9 L262.0 249.7 L262.2 248.5 L262.3 247.3 L262.5 246.1 L262.7 244.9 L262.9 243.6 L263.1 242.4 L263.3 241.2 L263.6 240.0 L263.8 238.8 L264.0 237.6 L264.2 236.4 L264.5 235.1 L264.7 233.9 L265.0 232.7 L265.2 231.5 L265.5 230.3 L265.8 229.1 L266.0 227.9 L266.3 226.6 L266.6 225.4 L266.9 224.2 L267.2 223.0 L267.6 221.8 L267.9 220.6 L268.2 219.4 L268.6 218.1 L268.9 216.9 L269.3 215.7 L269.6 214.5 L270.0 213.3 L270.4 212.1 L270.8 210.9 L271.6 209.6 L272.3 208.4 L272.7 207.2 L273.2 206.0 L273.6 204.8 L274.0 203.6 L274.4 202.4 L274.9 201.1 L275.3 199.9 L275.7 198.7 L276.1 197.5 L276.6 196.3 L277.0 195.1 L283.1 193.9 L283.6 192.6 L284.1 191.4 L284.6 190.2 L285.1 189.0 L285.6 187.8 L286.2 186.6 L286.8 185.4 L287.4 184.1 L288.0 182.9 L288.6 181.7 L289.2 180.5 L289.9 179.3 L290.6 178.1 L291.3 176.9 L292.0 175.6 L292.8 174.4 L293.5 173.2 L294.3 172.0 L295.2 170.8 L296.0 169.6 L296.9 168.4 L297.9 167.1 L298.9 165.9 L299.9 164.7 L301.0 163.5 L302.2 162.3 L303.4 161.1 L304.8 159.9 L306.3 158.6 L307.9 157.4 L309.9 156.2 L312.6 155.0Z" fill="url(#bodyh)"/>
<path d="M327.5 161.1 L329.0 162.3 L330.4 163.5 L331.7 164.7 L332.9 165.9 L334.0 167.1 L335.1 168.4 L336.2 169.6 L337.2 170.8 L338.2 172.0 L339.2 173.2 L340.1 174.4 L341.0 175.6 L341.8 176.9 L342.6 178.1 L343.4 179.3 L344.2 180.5 L345.0 181.7 L345.7 182.9 L346.4 184.1 L347.1 185.4 L347.8 186.6 L348.4 187.8 L349.1 189.0 L349.7 190.2 L350.3 191.4 L350.9 192.6 L351.5 193.9 L352.0 195.1 L352.6 196.3 L353.1 197.5 L353.6 198.7 L354.1 199.9 L354.6 201.1 L355.1 202.4 L355.6 203.6 L356.1 204.8 L356.5 206.0 L356.9 207.2 L357.4 208.4 L357.8 209.6 L358.2 210.9 L358.6 212.1 L359.0 213.3 L359.4 214.5 L359.7 215.7 L360.1 216.9 L360.4 218.1 L360.8 219.4 L361.1 220.6 L361.4 221.8 L361.8 223.0 L362.1 224.2 L362.4 225.4 L362.7 226.6 L363.0 227.9 L363.2 229.1 L363.5 230.3 L363.8 231.5 L364.0 232.7 L364.3 233.9 L364.5 235.1 L364.8 236.4 L365.0 237.6 L365.2 238.8 L365.4 240.0 L365.7 241.2 L365.9 242.4 L366.1 243.6 L366.3 244.9 L366.5 246.1 L366.7 247.3 L366.8 248.5 L367.0 249.7 L367.2 250.9 L367.3 252.1 L367.5 253.4 L367.7 254.6 L367.8 255.8 L368.0 257.0 L368.1 258.2 L368.2 259.4 L368.4 260.6 L368.5 261.9 L368.6 263.1 L368.7 264.3 L368.9 265.5 L369.0 266.7 L369.1 267.9 L369.2 269.1 L369.3 270.4 L369.4 271.6 L369.5 272.8 L369.5 274.0 L369.6 275.2 L369.7 276.4 L369.8 277.6 L369.9 278.9 L369.9 280.1 L370.0 281.3 L370.1 282.5 L370.1 283.7 L370.2 284.9 L370.3 286.1 L370.3 287.4 L370.4 288.6 L370.4 289.8 L370.5 291.0 L370.5 292.2 L370.5 293.4 L370.6 294.6 L370.6 295.9 L370.6 297.1 L370.7 298.3 L370.7 299.5 L370.7 300.7 L370.8 301.9 L370.8 303.1 L370.8 304.4 L370.8 305.6 L370.9 306.8 L370.9 308.0 L370.9 309.2 L370.9 310.4 L370.9 311.6 L370.9 312.9 L370.9 314.1 L371.0 315.3 L371.0 316.5 L371.0 317.7 L371.0 318.9 L371.0 320.1 L371.0 321.4 L371.0 322.6 L371.0 323.8 L371.0 325.0 L371.0 326.2 L371.0 327.4 L371.0 328.6 L371.0 329.9 L371.0 331.1 L371.0 332.3 L371.0 333.5 L371.0 334.7" fill="none" stroke="#1d3a4a" stroke-width="0.9" opacity="0.8"/>
<!-- ear -->
<path d="M294.4 160V104Q295 90 301 89.5Q312 92 320 115Q326 135 327 160Z" fill="url(#earg)" stroke="#1d3344" stroke-width="1"/>
<path d="M296 160L304.5 171.6L326.8 160Z" fill="#0a6d95"/>
<!-- inner ellipse -->
<path d="M282.5 156C292 157 300 170 306.4 186C311 198 314.5 215 314.5 240C314.5 258 311.5 284 305.5 301C299.5 314 291 321 283.5 324C279 316 276 300 275 270C274 240 274 200 275.2 175C276.2 164 278.5 157 282.5 156Z" fill="none" stroke="#35cdf3" stroke-width="3.6"/>
<path d="M314.5 262C313 280 310 292 305.5 301C299.5 314 291 321 283.5 324" fill="none" stroke="#086f9c" stroke-width="4"/>
<path d="M282.5 156C292 157 300 170 306.4 186C311 198 314.5 215 314.5 240C314.5 258 311.5 284 305.5 301C299.5 314 291 321 283.5 324C279 316 276 300 275 270C274 240 274 200 275.2 175C276.2 164 278.5 157 282.5 156Z" fill="url(#inng)" stroke="#172c3a" stroke-width="1"/>
<path d="M298 179V308" stroke="#3a6a80" stroke-width="0.6" stroke-dasharray="10 4" opacity="0.55"/>

<!-- widgets -->
<path d="M296.8 107L299.2 120H294Z" fill="#222"/>
<path d="M300.3 136Q301.5 128.4 304.7 128.4Q308 128.4 309.3 136" fill="none" stroke="#233440" stroke-width="1.1"/>
<path d="M298.6 135L302 135.5L299.8 139.2Z M307.6 135.5L311 135L309.9 139.2Z" fill="#233440"/>
<path d="M280.6 137Q280.6 127 282.2 126.5Q283.4 128 284.8 138.6" fill="none" stroke="#6a6a6a" stroke-width="0.9"/>
<path d="M299.7 155.8H327" stroke="#2a2a2a" stroke-width="1.2"/><path d="M327 155.8H337.2" stroke="#6a6a6a" stroke-width="1.1"/>
<rect x="294.3" y="152.7" width="5.4" height="8" fill="#e8141a" stroke="#333" stroke-width="0.8"/>
<path d="M317.2 162V308" stroke="#222" stroke-width="1"/>
<path d="M317.2 157L319.5 165H315Z" fill="#333"/>
<rect x="340.2" y="229.5" width="20" height="24.3" rx="1.5" fill="#c6e2ed" stroke="#d6ebf2" stroke-width="0.7"/>
<text x="350.4" y="246.2" font-size="13" fill="#444" stroke="#444" stroke-width="0.15" text-anchor="middle" textLength="14.2" lengthAdjust="spacingAndGlyphs">6.39</text>
<!-- handles lines -->
<g stroke="#2a2a2a" stroke-width="1">
<path d="M298.5 322.3H337"/>
<path d="M298.8 308V322.3"/>
<path d="M279.3 333H290M290 335H302.6"/>
<path d="M312.8 323.7L306 334"/>
<path d="M307 313.5H316.6"/>
</g>
<g fill="#2d2d2d">
<rect x="304.5" y="310" width="4" height="5"/>
<rect x="283" y="319.5" width="4" height="5"/>
<rect x="310.8" y="321.2" width="4" height="5"/>
<rect x="288.6" y="332.5" width="4" height="5"/>
</g>
<g fill="#fff" stroke="#2a2a2a" stroke-width="1">
<rect x="291.8" y="307.2" width="4.6" height="8.6"/>
<rect x="316.6" y="308.8" width="5" height="8.6"/>
<rect x="273.7" y="328.7" width="5.2" height="8.6"/>
<rect x="302.6" y="332" width="5" height="8"/>
</g>
<path d="M316 318H319.5L317.7 322Z" fill="#2a2a2a"/>
<path d="M344 325.5Q348 324 348.5 327Q348 329.5 344 328.5" fill="none" stroke="#555" stroke-width="0.7"/>

<!-- right panel -->
<g>
<rect x="490.3" y="90.5" width="127.6" height="154" rx="1.5" fill="#e9ebef"/>
<rect x="491" y="91" width="126.4" height="152.5" fill="#fafafa"/>
<rect x="491" y="243" width="126.4" height="1.4" fill="#dcdfe6"/>
<rect x="491" y="91" width="126.6" height="34.8" fill="#ffffff"/>
<rect x="491" y="125.3" width="126.6" height="1" fill="#e6e8ec"/>
<rect x="510.3" y="91" width="1" height="34.8" fill="#eef0f2"/>
<path d="M496.8 110.3L500.8 102.2L504.8 110.3Z" fill="#2e445c"/>
<text x="516" y="111.6" font-size="12.5" fill="#3b4a5c" stroke="#3b4a5c" stroke-width="0.3" textLength="22" lengthAdjust="spacingAndGlyphs">Shape</text>
<!-- lock -->
<rect x="584.2" y="105" width="7.2" height="8.8" rx="0.8" fill="#4a5a6c"/>
<path d="M586.2 102.2Q586.2 98 588.6 98Q590.8 98 590.8 101.5V105.5" fill="none" stroke="#4a5a6c" stroke-width="1.2"/>
<!-- bulb panel -->
<path d="M602.8 108.5Q600.8 104 600.8 101.5Q601 97.2 604.4 97.2Q607.8 97.2 608 101.5Q608 104 606 108.5Z" fill="#c8ccd2" stroke="#5a6673" stroke-width="0.9"/>
<path d="M602.8 109.3H606L604.4 114.4Z" fill="#5a6673"/>
<!-- solid -->
<ellipse cx="530.4" cy="169" rx="12.3" ry="21.2" fill="none" stroke="#4b8fe0" stroke-width="1.5"/>
<ellipse cx="530.4" cy="169" rx="10.2" ry="18.6" fill="#0a9ad8"/>
<ellipse cx="578" cy="169" rx="12" ry="21" fill="#fff"/>
<ellipse cx="578" cy="169" rx="9.6" ry="18" fill="url(#holep)"/>
<text x="530.4" y="208" font-size="10" fill="#757c84" text-anchor="middle" textLength="14.6" lengthAdjust="spacingAndGlyphs">Solid</text>
<text x="578" y="208" font-size="10" fill="#757c84" text-anchor="middle" textLength="12.4" lengthAdjust="spacingAndGlyphs">Hole</text>
</g>

<!-- bottom right -->
<rect x="575" y="569" width="43" height="17" rx="2" fill="#ffffff" fill-opacity="0.9" stroke="#eceef0" stroke-width="0.8"/>
<text x="596.5" y="581.5" font-size="10" fill="#87909a" text-anchor="middle" textLength="24" lengthAdjust="spacingAndGlyphs">Edit Grid</text>
<rect x="583" y="597" width="36" height="20" rx="1" fill="#ffffff" fill-opacity="0.9" stroke="#eceef0" stroke-width="0.8"/>
<text x="552.5" y="609.5" font-size="10" fill="#5d6670" textLength="27" lengthAdjust="spacingAndGlyphs">Snap Grid</text>
<text x="587.5" y="610.5" font-size="10" fill="#7a828b" textLength="20" lengthAdjust="spacingAndGlyphs">1.0 mm</text>
<path d="M610.2 607.8L611.7 604.2L613.2 607.8Z" fill="#333"/>
</svg>
</body></html>
